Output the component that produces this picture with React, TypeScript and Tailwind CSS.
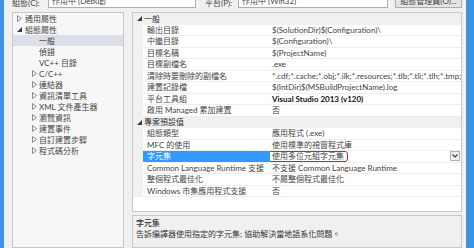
import React from 'react';

const font = { fontFamily: 'Lato, "Noto Sans CJK TC", sans-serif' };

type TreeItem = { label: string; level: number; arrow?: 'open' | 'closed'; selected?: boolean };

const tree: TreeItem[] = [
    { label: '通用屬性', level: 0, arrow: 'closed' },
    { label: '組態屬性', level: 0, arrow: 'open' },
    { label: '一般', level: 1, selected: true },
    { label: '偵錯', level: 1 },
    { label: 'VC++ 目錄', level: 1 },
    { label: 'C/C++', level: 1, arrow: 'closed' },
    { label: '連結器', level: 1, arrow: 'closed' },
    { label: '資訊清單工具', level: 1, arrow: 'closed' },
    { label: 'XML 文件產生器', level: 1, arrow: 'closed' },
    { label: '瀏覽資訊', level: 1, arrow: 'closed' },
    { label: '建置事件', level: 1, arrow: 'closed' },
    { label: '自訂建置步驟', level: 1, arrow: 'closed' },
    { label: '程式碼分析', level: 1, arrow: 'closed' },
];

type Row = { cat?: string; name?: string; value?: string; bold?: boolean; selected?: boolean };

const rows: Row[] = [
    { cat: '一般' },
    { name: '輸出目錄', value: '$(SolutionDir)$(Configuration)\\' },
    { name: '中繼目錄', value: '$(Configuration)\\' },
    { name: '目標名稱', value: '$(ProjectName)' },
    { name: '目標副檔名', value: '.exe' },
    { name: '清除時要刪除的副檔名', value: '*.cdf;*.cache;*.obj;*.ilk;*.resources;*.tlb;*.tli;*.tlh;*.tmp;*.rsp;*.pgc;*.pgd;*.meta' },
    { name: '建置記錄檔', value: '$(IntDir)$(MSBuildProjectName).log' },
    { name: '平台工具組', value: 'Visual Studio 2013 (v120)', bold: true },
    { name: '啟用 Managed 累加建置', value: '否' },
    { cat: '專案預設值' },
    { name: '組態類型', value: '應用程式 (.exe)' },
    { name: 'MFC 的使用', value: '使用標準的視窗程式庫' },
    { name: '字元集', value: '使用多位元組字元集', selected: true },
    { name: 'Common Language Runtime 支援', value: '不支援 Common Language Runtime' },
    { name: '整個程式最佳化', value: '不屬整個程式最佳化' },
    { name: 'Windows 市集應用程式支援', value: '否' },
];

const Closed = () => (
    <svg width="5" height="7" viewBox="0 0 5 7" className="shrink-0">
        <path d="M0.5 0.5 L4.5 3.5 L0.5 6.5 Z" fill="none" stroke="#8a8a8a" strokeWidth="1" />
    </svg>
);

const Open = () => (
    <svg width="5" height="5" viewBox="0 0 5 5" className="shrink-0">
        <path d="M5 0 L5 5 L0 5 Z" fill="#3a3a3a" />
    </svg>
);

const Tree = () => (
    <div className="w-[112px] border border-[#c8c8c8] bg-[#f7f7f7] h-full">
        {tree.map((t, i) => (
            <div
                key={i}
                className={`h-[11px] flex items-center text-[8px] leading-none text-[#444] ${t.selected ? 'bg-[#dcdfe8]' : ''}`}
            >
                <div className={`${t.level === 0 ? 'w-[8px] ml-[4px]' : 'w-[7px] ml-[19px]'} flex items-center`}>
                    {t.arrow === 'closed' && <Closed />}
                    {t.arrow === 'open' && <Open />}
                </div>
                <span>{t.label}</span>
            </div>
        ))}
    </div>
);

const Grid = () => (
    <div className="h-[200px] border border-[#c8c8c8] bg-white overflow-hidden">
        {rows.map((r, i) =>
            r.cat ? (
                <div key={i} className="h-[11.5px] bg-[#f0f0f0] flex items-center text-[8px] leading-none text-[#333]">
                    <div className="w-[10px] flex justify-end pr-[1px]"><Open /></div>
                    <span className="ml-[1px]">{r.cat}</span>
                </div>
            ) : (
                <div key={i} className="h-[11.5px] flex text-[8px] leading-none text-[#444]">
                    <div className="w-[10px] bg-[#f0f0f0] shrink-0" />
                    <div className="flex-1 flex border-b border-[#eeeeee] min-w-0">
                        <div
                            className={`w-[127px] shrink-0 flex items-center pl-[4px] whitespace-nowrap overflow-hidden ${r.selected ? 'bg-[#3399ff] text-white' : ''}`}
                        >
                            {r.name}
                        </div>
                        <div className="flex-1 flex items-center min-w-0 overflow-hidden">
                            {r.selected ? (
                                <>
                                    <div className="ml-[-2px] h-[11px] px-[3px] flex items-center border border-[#e02020] rounded-[3px] whitespace-nowrap">
                                        {r.value}
                                    </div>
                                    <div className="ml-auto mr-[1px] w-[10px] h-[10px] border border-[#b0b0b0] bg-[#f0f0f0] flex items-center justify-center shrink-0">
                                        <svg width="6" height="4" viewBox="0 0 6 4">
                                            <path d="M0.5 0.5 L3 3 L5.5 0.5" fill="none" stroke="#333" strokeWidth="1.1" />
                                        </svg>
                                    </div>
                                </>
                            ) : (
                                <span className={`pl-[2px] whitespace-nowrap ${r.bold ? 'font-bold text-[#111]' : ''}`}>
                                    {r.value}
                                </span>
                            )}
                        </div>
                    </div>
                </div>
            )
        )}
    </div>
);

export default function App() {
    return (
        <div className="w-[474px] h-[248px] overflow-hidden bg-[#f0f0f0] flex" style={font}>
            <div className="w-[4px] bg-[#3d93e0] shrink-0" />
            <div className="flex-1 flex flex-col min-w-0">
                <div className="h-[12px] shrink-0 overflow-hidden">
                    <div className="flex items-end h-[8px] text-[8px] leading-none text-[#444]">
                        <span className="ml-[8px] w-[36px] pb-[1px]">組態(C):</span>
                        <div className="w-[148px] h-[14px] border border-[#adadad] bg-white flex items-center pl-[3px]">作用中 (Debug)</div>
                        <span className="ml-[9px] w-[33px] pb-[1px]">平台(P):</span>
                        <div className="w-[150px] h-[14px] border border-[#adadad] bg-white flex items-center pl-[3px]">作用中 (Win32)</div>
                        <div className="ml-[7px] w-[67px] h-[14px] border border-[#adadad] bg-[#e5e5e5] flex items-center justify-center">組態管理員(O)...</div>
                    </div>
                </div>
                <div className="flex flex-1 min-h-0">
                    <div className="ml-[8px]">
                        <Tree />
                    </div>
                    <div className="ml-[8px] w-[330px] flex flex-col">
                        <Grid />
                        <div className="mt-[3px] flex-1 border border-[#c8c8c8] bg-[#f0f0f0] px-[3px] pt-[2px] text-[8px] leading-[11px] text-[#333]">
                            <div className="font-medium">字元集</div>
                            <div>告訴編譯器使用指定的字元集; 協助解決當地語系化問題。</div>
                        </div>
                    </div>
                </div>
            </div>
            <div className="w-[8px] bg-[#3d93e0] shrink-0" />
        </div>
    );
}
